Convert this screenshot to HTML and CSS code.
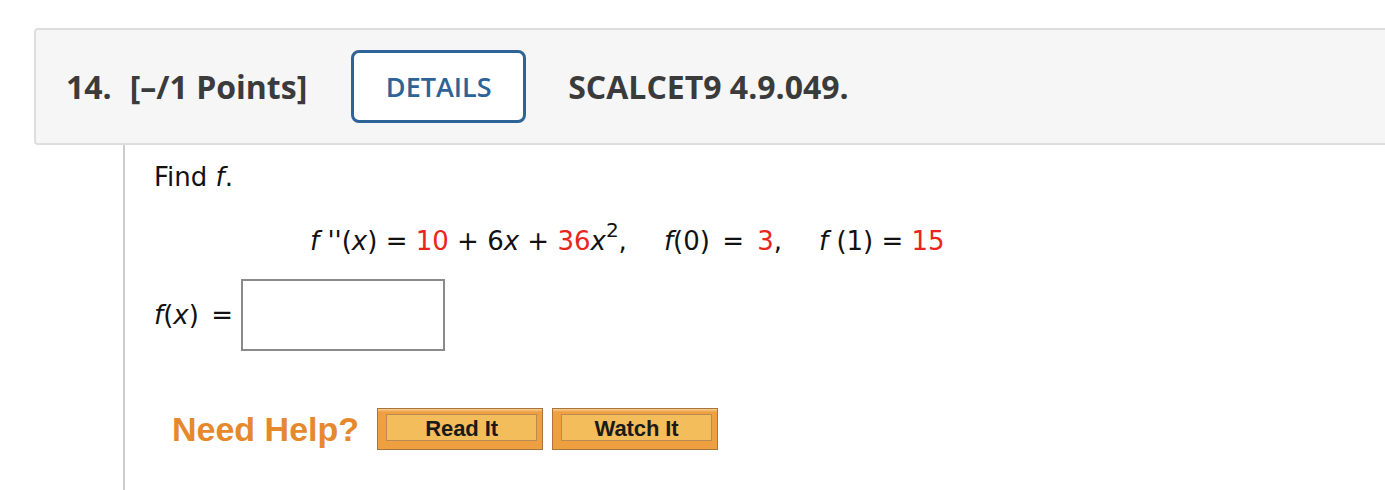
FILE: index.html
```html
<!DOCTYPE html>
<html lang="en">
<head>
<meta charset="utf-8">
<title>Question 14</title>
<link rel="stylesheet" href="styles.css">
</head>
<body>
<div class="page">
  <div class="qhead">
    <span class="qnum">14.</span>
    <span class="qpts">[–/1 Points]</span>
    <button class="details">DETAILS</button>
    <span class="qref">SCALCET9 4.9.049.</span>
  </div>
  <div class="qbody">
    <p class="prompt">Find <i>f</i>.</p>
    <p class="eq"><i>f</i> ''(<i>x</i>) = <span class="red">10</span> + 6<i>x</i> + <span class="red">36</span><i>x</i><sup>2</sup>,<span class="sp"></span><i>f</i>(0) <span class="weq">=</span> <span class="red">3</span>,<span class="sp"></span><i>f</i> (1) = <span class="red">15</span></p>
    <div class="answer">
      <span class="lbl"><i>f</i>(<i>x</i>) <span class="leq">=</span></span>
      <span class="box"></span>
    </div>
    <div class="help">
      <span class="need">Need Help?</span>
      <span class="hbtn"><span class="hin">Read It</span></span>
      <span class="hbtn"><span class="hin">Watch It</span></span>
    </div>
  </div>
</div>
</body>
</html>
```
FILE: styles.css
```css
html, body {
  margin: 0;
  padding: 0;
  background: #fff;
  overflow: hidden;
}
.page {
  padding: 28px 0 0 34px;
  width: 1400px;
}
.qhead {
  box-sizing: border-box;
  height: 117px;
  display: flex;
  align-items: center;
  padding-left: 30px;
  background: #f6f6f6;
  border: 2px solid #dedede;
  border-radius: 4px;
  font-family: "Open Sans", sans-serif;
  font-weight: 700;
  color: #3b3b3b;
  font-size: 32px;
}
.qpts {
  margin-left: 18px;
}
.details {
  box-sizing: border-box;
  margin-left: 44px;
  width: 175px;
  height: 73px;
  border: 3px solid #2d6396;
  border-radius: 8px;
  background: #fff;
  color: #2d6396;
  font-family: "Open Sans", sans-serif;
  font-weight: 600;
  font-size: 27px;
  padding: 0;
}
.qref {
  margin-left: 42px;
}
.qbody {
  margin-left: 89px;
  border-left: 2px solid #cccccc;
  padding: 16px 0 40px 29px;
  font-family: "DejaVu Sans", Verdana, sans-serif;
  font-size: 26px;
  color: #111;
}
.prompt {
  margin: 0;
  line-height: 32px;
}
.eq {
  margin: 32px 0 0 156px;
  line-height: 32px;
}
.eq sup {
  font-size: 20px;
  vertical-align: 13px;
  line-height: 0;
}
.weq {
  margin: 0 5px 0 4px;
}
.red {
  color: #e8261c;
}
.sp {
  display: inline-block;
  width: 37px;
}
.answer {
  display: flex;
  align-items: center;
  margin-top: 22px;
}
.lbl {
  width: 87px;
}
.leq {
  margin-left: 4px;
}
.box {
  box-sizing: border-box;
  width: 204px;
  height: 72px;
  border: 2px solid #8a8a8a;
  background: #fff;
}
.help {
  display: flex;
  align-items: center;
  margin-top: 57px;
  padding-left: 18px;
}
.need {
  font-family: "Liberation Sans", Arial, sans-serif;
  font-weight: 700;
  font-size: 34px;
  color: #e6892d;
  margin-right: 18px;
}
.hbtn {
  box-sizing: border-box;
  display: flex;
  width: 166px;
  height: 42px;
  padding: 5px 5px 8px 8px;
  margin-right: 9px;
  background: linear-gradient(#f7cf94 0, #efa142 3px, #ee9f40 100%);
  border: 1px solid #a8763c;
}
.hin {
  flex: 1;
  display: flex;
  align-items: center;
  justify-content: center;
  padding-top: 3px;
  background: #f3bd5b;
  border: 1px solid #b98a52;
  font-family: "Liberation Sans", Arial, sans-serif;
  font-weight: 700;
  font-size: 22px;
  color: #1a1a1a;
  letter-spacing: -0.1px;
}
```
